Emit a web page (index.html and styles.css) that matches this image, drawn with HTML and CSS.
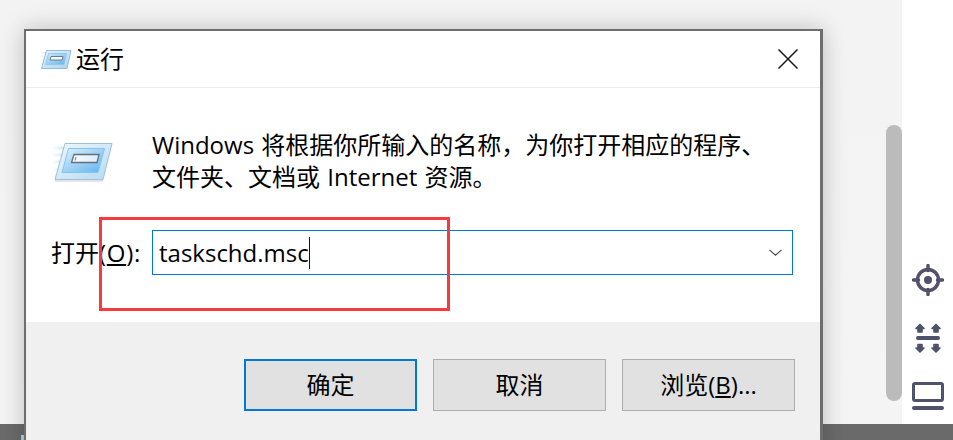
FILE: index.html
```html
<!DOCTYPE html>
<html lang="zh-CN">
<head>
<meta charset="utf-8">
<title>运行</title>
<link rel="stylesheet" href="styles.css">
</head>
<body>
<div class="page">
  <div class="stage">
    <main class="desk">
      <section class="dialog">
        <header class="titlebar">
          <svg class="run-icon-small" viewBox="0 0 32 22" aria-hidden="true">
            <defs>
              <linearGradient id="s1" x1="0" y1="0" x2="1" y2="1"><stop offset="0" stop-color="#e8f4fc"/><stop offset="1" stop-color="#a9d3f0"/></linearGradient>
              <linearGradient id="s2" x1="0" y1="0" x2="1" y2="1"><stop offset="0" stop-color="#d4ebfa"/><stop offset="1" stop-color="#64b4ec"/></linearGradient>
              <linearGradient id="s3" x1="0" y1="0" x2="1" y2="0"><stop offset="0" stop-color="#d8ecfa" stop-opacity="0"/><stop offset="1" stop-color="#bcdcf3"/></linearGradient>
            </defs>
            <path d="M0 5h8M0 8.500h7M0 12h6M0 15.500h5" stroke="url(#s3)" stroke-width="1.800"/>
            <path d="M6.500 2.500H31L27 20.500H1.500Z" fill="url(#s1)" stroke="#93bddc"/>
            <path d="M8.500 5.500H26.500L24 16.500H5.500Z" fill="url(#s2)" stroke="#8cc4ec" stroke-width=".8"/>
            <path d="M11 8.500H23L22 12H10Z" fill="#f2f8fd" stroke="#6e7c8a"/>
          </svg>
          <h1 class="title">运行</h1>
          <svg class="close" viewBox="0 0 20 20" aria-hidden="true"><path d="M.5.500l19 19M19.500.500l-19 19" stroke="#1a1a1a" stroke-width="1.500"/></svg>
        </header>
        <div class="body">
          <div class="intro">
            <svg class="run-icon" viewBox="0 0 62 46" aria-hidden="true">
              <defs>
                <linearGradient id="b1" x1="0" y1="0" x2="1" y2="1"><stop offset="0" stop-color="#eef7fd"/><stop offset="1" stop-color="#b4daf3"/></linearGradient>
                <linearGradient id="b2" x1="0" y1="0" x2="1" y2="1"><stop offset="0" stop-color="#e0f1fc"/><stop offset="1" stop-color="#5fb3ee"/></linearGradient>
                <linearGradient id="b3" x1="0" y1="0" x2="1" y2="0"><stop offset="0" stop-color="#d8ecfa" stop-opacity="0"/><stop offset="1" stop-color="#c4e2f7"/></linearGradient>
                <linearGradient id="b4" x1="0" y1="0" x2="1" y2="0"><stop offset="0" stop-color="#f8fbfe"/><stop offset="1" stop-color="#dcedfa"/></linearGradient>
              </defs>
              <path d="M0 6h14M0 13h12M0 20h10M0 27h8M0 34h6" stroke="url(#b3)" stroke-width="3"/>
              <path d="M14 1.500H61L52 37.500H4Z" fill="url(#b1)" stroke="#9fc0d6"/>
              <path d="M17.500 6.500H53.500L47 30.500H11Z" fill="url(#b2)" stroke="#86c4ee"/>
              <path d="M23 12.500H48L46 20.500H20.500Z" fill="url(#b4)" stroke="#646f7a" stroke-width="1.300"/>
              <path d="M25 15L24 18.500" stroke="#6c7680"/>
              <path d="M4 39H52" stroke="#c8ccd0" stroke-width="1.200"/>
            </svg>
            <p class="desc">Windows 将根据你所输入的名称，为你打开相应的程序、<br>文件夹、文档或 Internet 资源。</p>
          </div>
          <div class="open-row">
            <label class="open-label" for="cmd">打开<span class="latin">(<u>O</u>):</span></label>
            <div class="combo" id="cmd">
              <span class="combo-text">taskschd.msc</span><span class="caret"></span>
              <svg class="chev" viewBox="0 0 13 7" aria-hidden="true"><path d="M.500.800l6 5.400 6-5.400" fill="none" stroke="#4a4a4a" stroke-width="1.100"/></svg>
            </div>
          </div>
        </div>
        <footer class="footer">
          <button class="btn btn-default">确定</button>
          <button class="btn">取消</button>
          <button class="btn">浏览(<u>B</u>)...</button>
        </footer>
      </section>
      <div class="scrollbar"></div>
      <div class="mark"></div>
    </main>
    <aside class="rail">
      <svg class="rail-icon" viewBox="0 0 32 32" aria-hidden="true">
        <circle cx="16" cy="16" r="10.500" fill="none" stroke="#50516a" stroke-width="3.400"/>
        <circle cx="16" cy="16" r="4" fill="#50516a"/>
        <path d="M16 1.500v5M16 25.500v5M1.500 16h5M25.500 16h5" stroke="#50516a" stroke-width="3.400" stroke-linecap="round"/>
      </svg>
      <svg class="rail-icon" viewBox="0 0 32 32" aria-hidden="true">
        <rect x="4" y="13" width="24" height="4" rx="2" fill="#50516a"/>
        <path d="M8 1.500l4 4h-2v3.500h-4v-3.500h-2ZM24 1.500l4 4h-2v3.500h-4v-3.500h-2ZM8 29l4-4h-2v-3.500h-4v3.500h-2ZM24 29l4-4h-2v-3.500h-4v3.500h-2Z" fill="#50516a" stroke="#50516a" stroke-width="1.600" stroke-linejoin="round"/>
      </svg>
      <svg class="rail-icon" viewBox="0 0 32 32" aria-hidden="true">
        <rect x="1.500" y="1.500" width="29" height="17" rx="1.500" fill="none" stroke="#50516a" stroke-width="3"/>
        <rect x="0" y="24" width="32" height="4" rx="2" fill="#50516a"/>
      </svg>
    </aside>
  </div>
  <div class="bottom-strip"><span class="strip-bit"></span></div>
</div>
</body>
</html>
```

FILE: styles.css
```css
* { box-sizing: border-box; }
html, body { margin: 0; height: 100%; overflow: hidden; background: #fff; }
body { font-family: "Open Sans", "Noto Sans CJK SC", sans-serif; color: #000; }
.page { width: 953px; height: 440px; display: flex; flex-direction: column; overflow: hidden; position: relative; }
.stage { flex: 1 1 auto; min-height: 0; display: flex; }
.desk { width: 902px; flex: none; background: linear-gradient(#f3f3f3, #f4f4f4); padding: 29px 0 0 24px; position: relative; }
.bottom-strip { height: 16px; flex: none; background: #6a6a6a; display: flex; align-items: flex-end; padding-left: 21px; }
.strip-bit { width: 3px; height: 5px; background: #a9d3e8; }

.dialog { width: 799px; height: 430px; position: relative; z-index: 2; background: #fff; border: 2px solid #6e6e6e; border-right-width: 3px; border-bottom: 0; box-shadow: 0 0 22px rgba(0,0,0,.22); display: flex; flex-direction: column; }
.titlebar { height: 57px; flex: none; display: flex; align-items: center; padding: 0 22px 0 14px; border-bottom: 1px solid #ececec; }
.run-icon-small { width: 32px; height: 22px; flex: none; margin-right: 4px; }
.title { margin: 0; font: inherit; font-size: 24px; line-height: 32px; font-weight: 400; flex: 1; }
.close { width: 20px; height: 20px; flex: none; margin-bottom: 1px; }

.body { height: 234px; flex: none; padding: 0 28px 0 25px; }
.intro { display: flex; padding-top: 41px; height: 142px; }
.run-icon { width: 62px; height: 46px; flex: none; margin: 13px 0 0; }
.desc { margin: 0 0 0 39px; font-size: 24px; line-height: 32px; white-space: nowrap; word-spacing: 1px; }
.open-row { display: flex; align-items: center; }
.open-label { font-size: 24px; line-height: 32px; width: 101px; flex: none; white-space: nowrap; }
.latin { letter-spacing: .7px; }
.combo { width: 641px; height: 45px; flex: none; border: 1px solid #0078d7; background: #fff; display: flex; align-items: center; padding-left: 6px; font-size: 24px; }
.combo-text { line-height: 32px; }
.caret { width: 1px; height: 32px; background: #111; margin-top: 1px; }
.chev { width: 13px; height: 7px; margin-left: auto; margin-right: 10px; }

.footer { flex: 1; background: #f0f0f0; display: flex; align-items: flex-start; gap: 16px; padding: 37px 0 0 218px; }
.btn { width: 173px; height: 52px; flex: none; padding: 0; background: #e1e1e1; border: 1px solid #adadad; font: inherit; font-size: 24px; line-height: 32px; color: #000; }
.btn-default { border: 2px solid #0078d7; }

.scrollbar { position: absolute; left: 886px; top: 125px; width: 16px; height: 276px; border-radius: 8px; background: #bbb; }
.mark { position: absolute; z-index: 3; left: 99px; top: 217px; width: 351px; height: 94px; border: 3px solid #f63b3e; }

.rail { flex: 1; display: flex; flex-direction: column; align-items: center; padding-top: 264px; gap: 27px; }
.rail-icon { width: 32px; height: 32px; flex: none; }
```
